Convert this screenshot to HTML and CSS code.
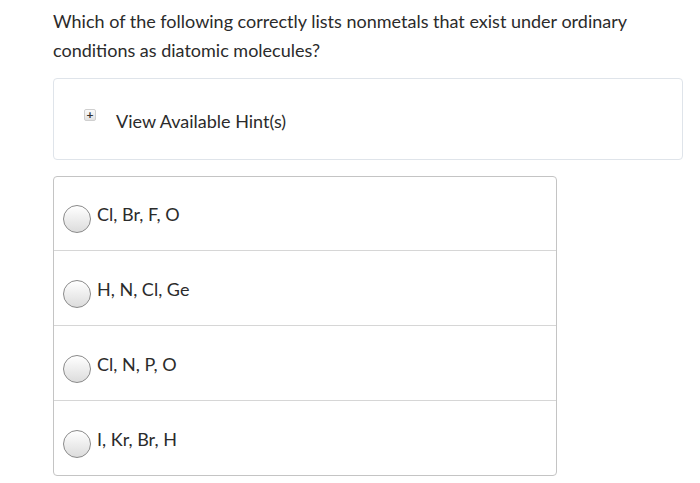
FILE: index.html
```html
<!DOCTYPE html>
<html>
<head>
  <title>Question</title>
  <link rel="stylesheet" href="styles.css">
</head>
<body>
  <div class="container">
    <p class="question">Which of the following correctly lists nonmetals that exist under ordinary conditions as diatomic molecules?</p>

    <div class="hint-box">
      <span class="hint-toggle">+</span>
      <span class="hint-label">View Available Hint(s)</span>
    </div>

    <div class="options">
      <label class="option">
        <span class="radio"></span>
        <span class="option-text">Cl, Br, F, O</span>
      </label>
      <label class="option">
        <span class="radio"></span>
        <span class="option-text">H, N, Cl, Ge</span>
      </label>
      <label class="option">
        <span class="radio"></span>
        <span class="option-text">Cl, N, P, O</span>
      </label>
      <label class="option">
        <span class="radio"></span>
        <span class="option-text">I, Kr, Br, H</span>
      </label>
    </div>
  </div>
</body>
</html>
```

FILE: styles.css
```css
:root {
  --text: #2b2b2b;
  --hint-border: #dfe4ea;
  --option-border: #c4c4c4;
  --divider: #d6d6d6;
  --font: Lato, "Open Sans", sans-serif;
}

* {
  margin: 0;
  padding: 0;
  box-sizing: border-box;
}

body {
  font-family: var(--font);
  color: var(--text);
  background: #ffffff;
}

.container {
  padding: 7px 17px 0 53px;
}

.question {
  font-size: 18px;
  line-height: 29px;
  width: 600px;
}

.hint-box {
  display: flex;
  align-items: flex-start;
  height: 82px;
  margin-top: 13px;
  padding: 30px 0 0 30px;
  border: 1px solid var(--hint-border);
  border-radius: 4px;
}

.hint-toggle {
  width: 12px;
  height: 12px;
  margin-right: 20px;
  border: 1px solid #cfcfcf;
  border-radius: 2px;
  background: linear-gradient(#fafafa, #e2e2e2);
  font-size: 12px;
  font-weight: 700;
  line-height: 10px;
  text-align: center;
  color: #333;
}

.hint-label {
  font-size: 18px;
  line-height: 20px;
  margin-top: 2px;
}

.options {
  width: 504px;
  margin-top: 16px;
  border: 1px solid var(--option-border);
  border-radius: 4px;
}

.option {
  display: flex;
  align-items: flex-start;
  height: 75px;
  padding: 29px 0 0 9px;
  border-top: 1px solid var(--divider);
}

.option:first-child {
  height: 73px;
  padding-top: 28px;
  border-top: none;
}

.radio {
  width: 28px;
  height: 28px;
  margin-right: 6px;
  border: 1px solid #8a8a8a;
  border-radius: 50%;
  background: linear-gradient(#ffffff, #dcdcdc);
  box-shadow: inset 0 1px 1px rgba(255, 255, 255, 0.8);
}

.option-text {
  font-size: 18px;
  line-height: 18px;
}
```
